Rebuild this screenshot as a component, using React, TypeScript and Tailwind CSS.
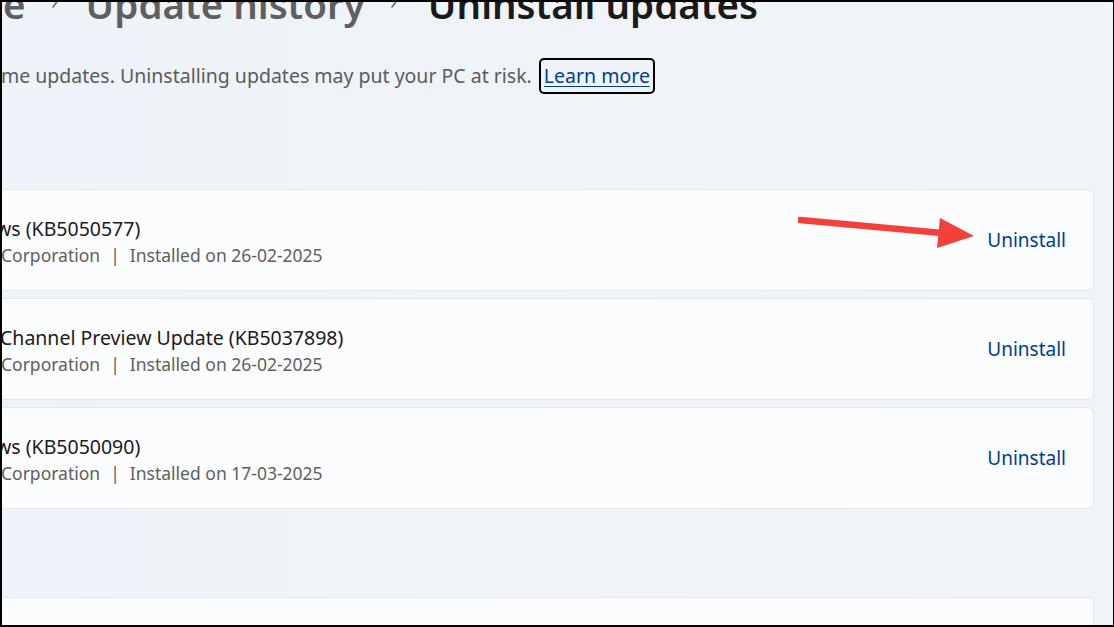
import React from "react";

interface UpdateItem {
  title: string;
  date: string;
  shift: string;
}

const updates: UpdateItem[] = [
  { title: "ws (KB5050577)", date: "26-02-2025", shift: "-ml-[7px]" },
  { title: "Channel Preview Update (KB5037898)", date: "26-02-2025", shift: "-ml-[3px]" },
  { title: "ws (KB5050090)", date: "17-03-2025", shift: "-ml-[7px]" },
];

const Chevron = () => (
  <svg width="10" height="20" viewBox="0 0 10 20" className="shrink-0 mt-[-10px]">
    <path d="M2 2 L8 10 L2 18" fill="none" stroke="#6b6b6b" strokeWidth="1.6" strokeLinecap="round" />
  </svg>
);

const Arrow = () => (
  <svg width="190" height="40" viewBox="0 0 190 40" className="absolute left-[796px] top-[210px]">
    <line x1="2" y1="8" x2="144" y2="21" stroke="#f4403a" strokeWidth="6.5" strokeLinecap="round" />
    <polygon points="142,6 139,36 176,24" fill="#f4403a" />
  </svg>
);

const UpdateCard = ({ item }: { item: UpdateItem }) => {
  return (
    <div className="h-[102px] -ml-[20px] mr-[19px] rounded-[6px] border border-[#e3e6eb] bg-[#fbfcfd] flex items-center justify-between pl-[20px] pr-[27px]">
      <div className="flex flex-col pt-[4px]">
        <p className={`${item.shift} text-[19.5px] leading-[26px] text-[#1b1b1b] whitespace-nowrap`}>{item.title}</p>
        <p className="-ml-[2px] text-[17.5px] leading-[26px] text-[#5f5f5f] whitespace-nowrap">
          Corporation<span className="mx-[10px]">|</span>Installed on {item.date}
        </p>
      </div>
      <button className="text-[19px] leading-[26px] text-[#003e92]">Uninstall</button>
    </div>
  );
};

export default function App() {
  return (
    <div className="relative w-[1114px] h-[627px] overflow-hidden border-l-2 border-t-2 border-b-2 border-r border-black bg-gradient-to-r from-[#eef3f9] to-[#f0f4f8] font-['Noto_Sans',sans-serif]">
      <div className="flex items-center gap-[25px] -mt-[17px] pl-[1px] text-[38.5px] leading-[38.5px] font-semibold whitespace-nowrap">
        <span className="text-[#5f5f5f]">e</span>
        <Chevron />
        <span className="text-[#5f5f5f]">Update history</span>
        <Chevron />
        <span className="ml-[3px] text-[#1a1a1a]">Uninstall updates</span>
      </div>

      <div className="flex items-center mt-[34px] -ml-[1px] text-[19.5px] text-[#5c5c5c] whitespace-nowrap">
        <span>me updates. Uninstalling updates may put your PC at risk.</span>
        <span className="ml-[7px] rounded-[5px] border-2 border-black px-[3px] py-[3px] leading-[26px] text-[#003e92] underline underline-offset-[3px]">
          Learn more
        </span>
      </div>

      <div className="flex flex-col gap-[7px] mt-[95px]">
        {updates.map((item, index) => (
          <UpdateCard key={index} item={item} />
        ))}
      </div>

      <div className="h-[80px] mt-[88px] -ml-[20px] mr-[19px] rounded-[6px] border border-[#e3e6eb] bg-[#fbfcfd]" />

      <Arrow />
    </div>
  );
}
